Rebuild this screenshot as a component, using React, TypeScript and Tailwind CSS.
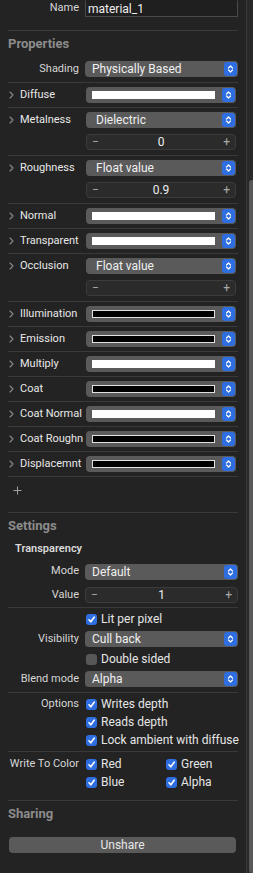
import React from 'react';

// Tipos para las filas de propiedades del material
type Control =
  | { kind: 'swatch'; color: 'white' | 'black' }
  | { kind: 'popup'; text: string; value?: string };

interface PropRow {
  label: string;
  control: Control;
}

const propRows: PropRow[] = [
  { label: 'Diffuse', control: { kind: 'swatch', color: 'white' } },
  { label: 'Metalness', control: { kind: 'popup', text: 'Dielectric', value: '0' } },
  { label: 'Roughness', control: { kind: 'popup', text: 'Float value', value: '0.9' } },
  { label: 'Normal', control: { kind: 'swatch', color: 'white' } },
  { label: 'Transparent', control: { kind: 'swatch', color: 'white' } },
  { label: 'Occlusion', control: { kind: 'popup', text: 'Float value', value: '' } },
  { label: 'Illumination', control: { kind: 'swatch', color: 'black' } },
  { label: 'Emission', control: { kind: 'swatch', color: 'black' } },
  { label: 'Multiply', control: { kind: 'swatch', color: 'white' } },
  { label: 'Coat', control: { kind: 'swatch', color: 'black' } },
  { label: 'Coat Normal', control: { kind: 'swatch', color: 'white' } },
  { label: 'Coat Roughn', control: { kind: 'swatch', color: 'black' } },
  { label: 'Displacemnt', control: { kind: 'swatch', color: 'black' } },
];

const Stepper = () => (
  <div className="flex h-[14px] w-[13px] shrink-0 items-center justify-center rounded-[3px] bg-[#2f6ee0]">
    <svg width="7" height="10" viewBox="0 0 7 10" fill="none" stroke="white" strokeWidth="1.2" strokeLinecap="round" strokeLinejoin="round">
      <path d="M1.5 4L3.5 2L5.5 4M1.5 6L3.5 8L5.5 6" />
    </svg>
  </div>
);

const Chevron = () => (
  <svg width="5" height="8" viewBox="0 0 5 8" fill="none" stroke="#8a8a8a" strokeWidth="1.1" strokeLinecap="round" strokeLinejoin="round">
    <path d="M1 1L4 4L1 7" />
  </svg>
);

const Check = ({ on }: { on: boolean }) =>
  on ? (
    <div className="flex h-[11px] w-[11px] shrink-0 items-center justify-center rounded-[3px] bg-[#2f6ee0]">
      <svg width="9" height="9" viewBox="0 0 9 9" fill="none" stroke="white" strokeWidth="1.6" strokeLinecap="round" strokeLinejoin="round">
        <path d="M2 4.8L3.8 6.8L7.2 2.2" />
      </svg>
    </div>
  ) : (
    <div className="h-[11px] w-[11px] shrink-0 rounded-[3px] bg-[#575757]" />
  );

const CheckItem = ({ label, on = true }: { label: string; on?: boolean }) => (
  <div className="flex items-center gap-[4px] whitespace-nowrap">
    <Check on={on} />
    <span className="text-[12px] text-[#e6e6e6]">{label}</span>
  </div>
);

const NumberField = ({ value }: { value: string }) => (
  <div className="flex h-[16px] w-full items-center rounded-[4px] border border-[#3c3c3c] bg-[#2b2b2b] px-[5px] text-[12px]">
    <span className="w-[10px] text-[#a8a8a8]">−</span>
    <span className="flex-1 text-center text-[#eeeeee]">{value}</span>
    <span className="w-[10px] text-right text-[#a8a8a8]">+</span>
  </div>
);

const SettingPopup = ({ text }: { text: string }) => (
  <div className="flex h-[16px] flex-1 items-center rounded-[4px] bg-[#5a5a5a] pr-px">
    <span className="flex-1 pl-[7px] text-[12px] text-[#f0f0f0]">{text}</span>
    <Stepper />
  </div>
);

const Label = ({ children }: { children: React.ReactNode }) => (
  <span className="w-[71px] shrink-0 whitespace-nowrap text-right text-[11px] text-[#d6d6d6]">{children}</span>
);

const SectionHeader = ({ title, h }: { title: string; h: string }) => (
  <div className={`mx-2 flex items-center ${h}`}>
    <span className="text-[13px] font-bold text-[#8c8c8c]">{title}</span>
  </div>
);

const PropertyRow = ({ row }: { row: PropRow }) => {
  const c = row.control;
  return (
    <div className="mx-2 border-b border-[#3a3a3a]">
      <div className="flex h-[24px] items-center">
        <div className="flex w-[12px] pl-px">
          <Chevron />
        </div>
        <span className="w-[66px] whitespace-nowrap text-[11px] text-[#e8e8e8]">{row.label}</span>
        <div className="flex h-[16px] w-[150px] items-center rounded-[4px] bg-[#5a5a5a] pr-px">
          {c.kind === 'swatch' ? (
            <div className="flex-1 pl-[6px] pr-[7px]">
              {c.color === 'white' ? (
                <div className="h-[8px] bg-white" />
              ) : (
                <div className="h-[8px] border border-[#e0e0e0] bg-black" />
              )}
            </div>
          ) : (
            <span className="flex-1 pl-[10px] text-[12px] text-[#f0f0f0]">{c.text}</span>
          )}
          <Stepper />
        </div>
      </div>
      {c.kind === 'popup' && c.value !== undefined && (
        <div className="mt-[2px] pb-[5px] pl-[78px]">
          <div className="w-[150px]">
            <NumberField value={c.value} />
          </div>
        </div>
      )}
    </div>
  );
};

export default function App() {
  return (
    <div className="flex h-[873px] w-[253px] overflow-hidden bg-[#232323] font-['Roboto',sans-serif]">
      <div className="min-w-0 flex-1">
        {/* Nombre */}
        <div className="mx-2 h-[31px] border-b border-[#3a3a3a]">
          <div className="flex h-[17px] items-center gap-[6px]">
            <Label>Name</Label>
            <div className="flex h-[17px] flex-1 items-center border border-t-transparent border-[#4a4a4a] bg-[#1f1f1f] pl-[2px] text-[12px] text-[#f0f0f0]">
              material_1
            </div>
          </div>
        </div>

        {/* Properties */}
        <SectionHeader title="Properties" h="h-[25px]" />
        <div className="mx-2 flex h-[27px] items-center gap-[6px] border-b border-[#3a3a3a]">
          <Label>Shading</Label>
          <SettingPopup text="Physically Based" />
        </div>
        {propRows.map((r) => (
          <PropertyRow key={r.label} row={r} />
        ))}
        <div className="mx-2 h-[36px] border-b border-[#3a3a3a] pl-[5px] pt-[9px]">
          <svg width="9" height="9" viewBox="0 0 9 9" stroke="#a0a0a0" strokeWidth="1">
            <path d="M4.5 0.5V8.5M0.5 4.5H8.5" />
          </svg>
        </div>

        {/* Settings */}
        <SectionHeader title="Settings" h="h-[25px]" />
        <div className="mx-2 border-b border-[#3a3a3a]">
          <div className="flex h-[22px] items-center pl-[7px] text-[11px] font-semibold text-[#dadada]">Transparency</div>
          <div className="flex h-[23px] items-center gap-[6px]">
            <Label>Mode</Label>
            <SettingPopup text="Default" />
          </div>
          <div className="flex h-[24px] items-center gap-[6px]">
            <Label>Value</Label>
            <div className="flex-1">
              <NumberField value="1" />
            </div>
          </div>
        </div>
        <div className="mx-2 border-b border-[#3a3a3a] pb-[3px] pt-[1px]">
          <div className="flex h-[20px] items-center pl-[78px]">
            <CheckItem label="Lit per pixel" />
          </div>
          <div className="flex h-[20px] items-center gap-[6px]">
            <Label>Visibility</Label>
            <SettingPopup text="Cull back" />
          </div>
          <div className="flex h-[20px] items-center pl-[78px]">
            <CheckItem label="Double sided" on={false} />
          </div>
          <div className="flex h-[20px] items-center gap-[6px]">
            <Label>Blend mode</Label>
            <SettingPopup text="Alpha" />
          </div>
        </div>
        <div className="mx-2 border-b border-[#3a3a3a] pb-[2px] pt-[2px]">
          <div className="flex h-[18px] items-center gap-[7px]">
            <Label>Options</Label>
            <CheckItem label="Writes depth" />
          </div>
          <div className="flex h-[18px] items-center pl-[78px]">
            <CheckItem label="Reads depth" />
          </div>
          <div className="flex h-[18px] items-center pl-[78px]">
            <CheckItem label="Lock ambient with diffuse" />
          </div>
        </div>
        <div className="mx-2 flex gap-[7px] border-b border-[#3a3a3a] pb-[9px] pt-[3px]">
          <div className="flex h-[18px] items-center">
            <Label>Write To Color</Label>
          </div>
          <div className="grid flex-1 grid-cols-[80px_1fr]">
            <div className="flex h-[18px] items-center"><CheckItem label="Red" /></div>
            <div className="flex h-[18px] items-center"><CheckItem label="Green" /></div>
            <div className="flex h-[18px] items-center"><CheckItem label="Blue" /></div>
            <div className="flex h-[18px] items-center"><CheckItem label="Alpha" /></div>
          </div>
        </div>

        {/* Sharing */}
        <SectionHeader title="Sharing" h="h-[26px]" />
        <div className="ml-[9px] mt-[10px] flex h-[16px] w-[227px] items-center justify-center rounded-[4px] bg-[#5a5a5a] text-[12px] text-[#e8e8e8]">
          Unshare
        </div>
      </div>

      {/* Barra de desplazamiento */}
      <div className="flex w-[7px] shrink-0 flex-col border-l border-[#3a3a3a] bg-[#292929]">
        <div className="h-[180px] shrink-0" />
        <div className="ml-[2px] flex-1 rounded-l-[3px] bg-[#585858]" />
      </div>
    </div>
  );
}
